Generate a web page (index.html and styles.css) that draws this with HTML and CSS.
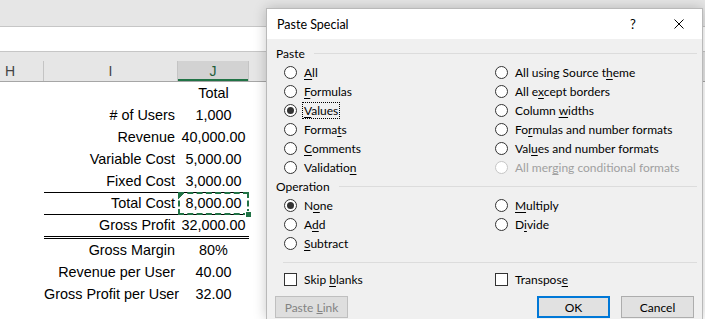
FILE: index.html
```html
<!DOCTYPE html>
<html lang="en">
<head>
  <meta charset="UTF-8">
  <meta name="viewport" content="width=device-width, initial-scale=1.0">
  <title>Paste Special</title>
  <link rel="stylesheet" href="styles.css">
</head>
<body>

  <!-- Worksheet behind the dialog -->
  <div class="sheet">
    <div class="ribbon"></div>
    <div class="formula-bar"></div>
    <div class="header-gap"></div>
    <div class="col-headers">
      <div class="col col-h">H</div>
      <div class="col col-i">I</div>
      <div class="col col-j active">J</div>
      <div class="col col-rest"></div>
    </div>

    <div class="rows">
      <div class="row"><div class="cell h"></div><div class="cell i"></div><div class="cell j">Total</div></div>
      <div class="row"><div class="cell h"></div><div class="cell i"># of Users</div><div class="cell j">1,000</div></div>
      <div class="row"><div class="cell h"></div><div class="cell i">Revenue</div><div class="cell j">40,000.00</div></div>
      <div class="row"><div class="cell h"></div><div class="cell i">Variable Cost</div><div class="cell j">5,000.00</div></div>
      <div class="row"><div class="cell h"></div><div class="cell i">Fixed Cost</div><div class="cell j">3,000.00</div></div>
      <div class="row top-rule"><div class="cell h"></div><div class="cell i">Total Cost</div><div class="cell j selected">8,000.00</div></div>
      <div class="row top-rule double"><div class="cell h"></div><div class="cell i">Gross Profit</div><div class="cell j">32,000.00</div></div>
      <div class="row"><div class="cell h"></div><div class="cell i">Gross Margin</div><div class="cell j">80%</div></div>
      <div class="row"><div class="cell h"></div><div class="cell i">Revenue per User</div><div class="cell j">40.00</div></div>
      <div class="row"><div class="cell h"></div><div class="cell i">Gross Profit per User</div><div class="cell j">32.00</div></div>
    </div>
  </div>

  <!-- Paste Special dialog -->
  <div class="dialog">
    <div class="title-bar">
      <span class="title">Paste Special</span>
      <div class="title-btns">
        <span class="title-btn help">?</span>
        <span class="title-btn">
          <svg width="10" height="10" viewBox="0 0 10 10"><path d="M0.5 0.5 L9.5 9.5 M9.5 0.5 L0.5 9.5" stroke="#000" stroke-width="1" fill="none"/></svg>
        </span>
      </div>
    </div>

    <div class="dialog-body">
      <div class="group-head"><span>Paste</span><span class="rule"></span></div>
      <div class="options">
        <label class="opt"><span class="radio"></span><span><u>A</u>ll</span></label>
        <label class="opt"><span class="radio"></span><span>All using Source t<u>h</u>eme</span></label>
        <label class="opt"><span class="radio"></span><span><u>F</u>ormulas</span></label>
        <label class="opt"><span class="radio"></span><span>All e<u>x</u>cept borders</span></label>
        <label class="opt"><span class="radio on"></span><span class="focus"><u>V</u>alues</span></label>
        <label class="opt"><span class="radio"></span><span>Column <u>w</u>idths</span></label>
        <label class="opt"><span class="radio"></span><span>Forma<u>t</u>s</span></label>
        <label class="opt"><span class="radio"></span><span>Fo<u>r</u>mulas and number formats</span></label>
        <label class="opt"><span class="radio"></span><span><u>C</u>omments</span></label>
        <label class="opt"><span class="radio"></span><span>Val<u>u</u>es and number formats</span></label>
        <label class="opt"><span class="radio"></span><span>Validatio<u>n</u></span></label>
        <label class="opt disabled"><span class="radio"></span><span>All mer<u>g</u>ing conditional formats</span></label>
      </div>

      <div class="group-head op"><span>Operation</span><span class="rule"></span></div>
      <div class="options">
        <label class="opt"><span class="radio on"></span><span>N<u>o</u>ne</span></label>
        <label class="opt"><span class="radio"></span><span><u>M</u>ultiply</span></label>
        <label class="opt"><span class="radio"></span><span>A<u>d</u>d</span></label>
        <label class="opt"><span class="radio"></span><span>D<u>i</u>vide</span></label>
        <label class="opt"><span class="radio"></span><span><u>S</u>ubtract</span></label>
      </div>

      <div class="separator"></div>

      <div class="options checks">
        <label class="opt"><span class="check"></span><span>Skip <u>b</u>lanks</span></label>
        <label class="opt"><span class="check"></span><span>Transpos<u>e</u></span></label>
      </div>

      <div class="buttons">
        <button class="btn disabled">Paste <u>L</u>ink</button>
        <span class="spacer"></span>
        <button class="btn default">OK</button>
        <button class="btn">Cancel</button>
      </div>
    </div>
  </div>

</body>
</html>
```

FILE: styles.css
```css
body {
  margin: 0;
  width: 705px;
  height: 319px;
  overflow: hidden;
  position: relative;
  background: #fff;
  font-family: 'Liberation Sans', Arial, sans-serif;
}

/* Worksheet */
.ribbon {
  height: 26px;
  background: #e6e6e6;
  border-bottom: 1px solid #c6c6c6;
}

.formula-bar {
  height: 24px;
  background: #fff;
  border-bottom: 1px solid #c6c6c6;
}

.header-gap {
  height: 9px;
  background: #e6e6e6;
}

.col-headers {
  display: flex;
  height: 21px;
  background: #e6e6e6;
  border-bottom: 1px solid #a6a6a6;
  box-sizing: border-box;
}

.col {
  box-sizing: border-box;
  line-height: 20px;
  font-size: 14px;
  color: #444;
  border-right: 1px solid #c4c4c4;
}

.col-h {
  width: 44px;
  padding-left: 5px;
}

.col-i {
  width: 134px;
  text-align: center;
}

.col-j {
  width: 71px;
  text-align: center;
}

.col-j.active {
  background: #d2d2d2;
  color: #1e5e3a;
  box-shadow: inset 0 -2px 0 #217346;
}

.col-rest {
  flex: 1;
  border-right: none;
}

.row {
  display: flex;
  height: 22px;
  line-height: 22px;
  font-size: 14.4px;
  color: #000;
}

.cell {
  box-sizing: border-box;
  white-space: nowrap;
}

.cell.h {
  width: 44px;
}

.cell.i {
  width: 134px;
  text-align: right;
  padding-right: 3px;
}

.cell.j {
  width: 71px;
  text-align: center;
}

.row.top-rule .i,
.row.top-rule .j {
  box-shadow: inset 0 1px 0 #000;
}

.row.double {
  height: 25px;
}

.row.double .i,
.row.double .j {
  height: 25px;
  border-bottom: 3px double #000;
}

.cell.selected {
  position: relative;
  background: linear-gradient(135deg, #217346 5px, transparent 5px);
}

.cell.selected::after {
  content: '';
  position: absolute;
  left: 0;
  top: 0;
  right: 0;
  bottom: -1px;
  border: 2px dashed #217346;
}

.cell.selected::before {
  content: '';
  position: absolute;
  right: -3px;
  bottom: -4px;
  width: 5px;
  height: 5px;
  background: #217346;
  border: 1px solid #fff;
  z-index: 1;
}

/* Dialog */
.dialog {
  position: absolute;
  left: 266px;
  top: 8px;
  width: 435px;
  height: 310px;
  background: #f0f0f0;
  border: 1px solid #b9b9b9;
  border-bottom: none;
  box-shadow: 0 0 12px rgba(0, 0, 0, 0.22);
  font-family: 'Lato', 'Liberation Sans', sans-serif;
  font-size: 12px;
  color: #000;
}

.title-bar {
  display: flex;
  align-items: center;
  height: 30px;
  background: #fff;
}

.title {
  padding-left: 10px;
  font-size: 12.5px;
}

.title-btns {
  margin-left: auto;
  display: flex;
}

.title-btn {
  width: 46px;
  height: 30px;
  display: flex;
  align-items: center;
  justify-content: center;
}

.title-btn.help {
  font-size: 13px;
}

.dialog-body {
  padding: 5px 5px 0 8px;
}

.group-head {
  display: flex;
  align-items: center;
  height: 18px;
  padding-left: 1px;
}

.group-head .rule {
  flex: 1;
  height: 1px;
  background: #dcdcdc;
  margin-left: 9px;
}

.options {
  display: grid;
  grid-template-columns: 211px 1fr;
  grid-auto-rows: 19px;
  margin: 1px 0 0 9px;
}

.opt {
  display: flex;
  align-items: center;
  gap: 7px;
  white-space: nowrap;
}

.opt u {
  text-decoration-thickness: 1px;
  text-underline-offset: 2px;
}

.radio {
  position: relative;
  width: 13px;
  height: 13px;
  box-sizing: border-box;
  border: 1px solid #333;
  border-radius: 50%;
  background: #fff;
  flex: none;
}

.radio.on::after {
  content: '';
  position: absolute;
  left: 2px;
  top: 2px;
  width: 7px;
  height: 7px;
  border-radius: 50%;
  background: #333;
}

.opt.disabled {
  color: #a0a0a0;
}

.opt.disabled .radio {
  border-color: #c6c6c6;
}

.focus {
  outline: 1px dotted #000;
  padding: 0 1px;
  margin-left: -1px;
}

.separator {
  height: 1px;
  background: #dcdcdc;
  margin: 9px 0 0 8px;
}

.options.checks {
  margin-top: 7px;
}

.check {
  width: 13px;
  height: 13px;
  box-sizing: border-box;
  border: 1px solid #333;
  background: #fff;
  flex: none;
}

.buttons {
  display: flex;
  margin: 7px 3px 0 0;
}

.spacer {
  flex: 1;
}

.btn {
  width: 73px;
  height: 22px;
  box-sizing: border-box;
  border: 1px solid #adadad;
  background: #e1e1e1;
  font-family: inherit;
  font-size: 12px;
  color: #000;
  padding: 0;
  margin-left: 11px;
}

.btn.disabled {
  margin-left: 0;
  color: #838383;
  background: #dedede;
  border-color: #bfbfbf;
}

.btn.default {
  border: 2px solid #0078d7;
}

.btn u {
  text-decoration-thickness: 1px;
}
```
